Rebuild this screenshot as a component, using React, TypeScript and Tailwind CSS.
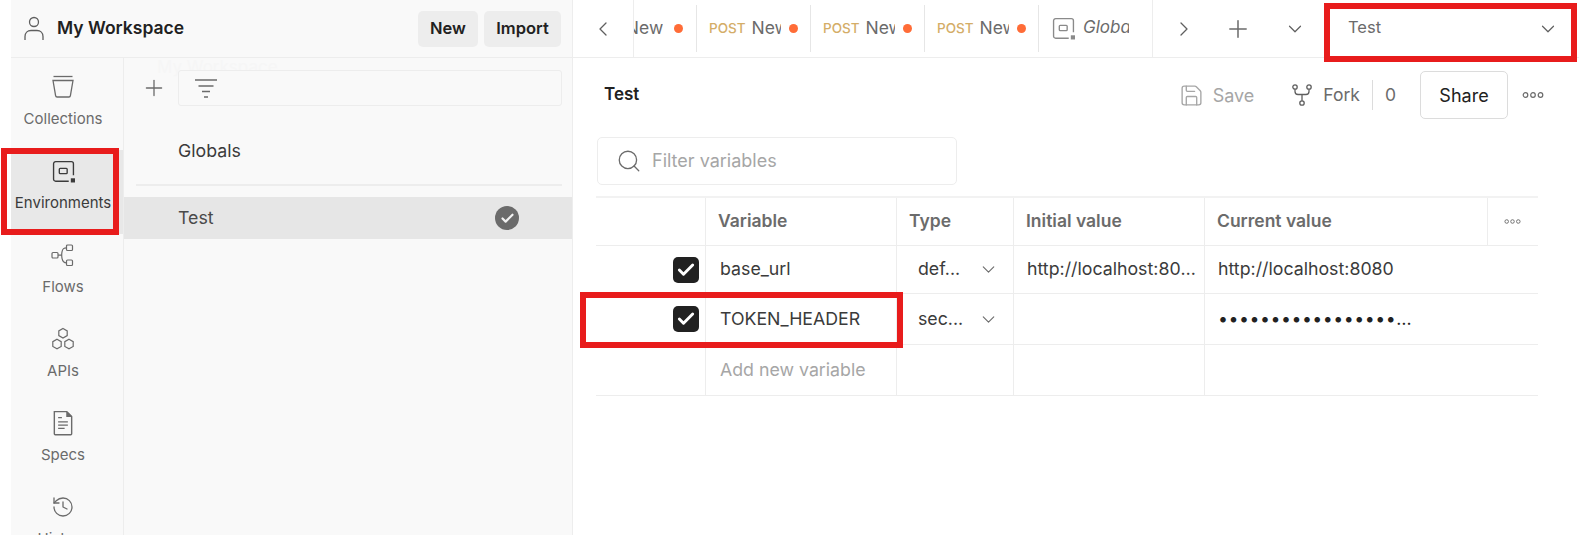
import React from 'react';
import { Check, ChevronDown, ChevronLeft, ChevronRight, History, Plus, Save, Search } from 'lucide-react';

const EnvIcon = ({ className }: { className?: string }) => (
  <svg viewBox="0 0 22 22" fill="none" stroke="currentColor" strokeWidth="1.3" className={className}>
    <path d="M16 20.3H3.5a2 2 0 0 1-2-2V3.6a2 2 0 0 1 2-2h15a2 2 0 0 1 2 2v11" />
    <rect x="7" y="8" width="7.5" height="5" rx="0.8" />
    <rect x="18" y="17.5" width="4" height="4" fill="currentColor" stroke="none" />
  </svg>
);

const CollectionsIcon = () => (
  <svg viewBox="0 0 24 24" fill="none" stroke="#6b6b6b" strokeWidth="1.3" className="h-[24px] w-[24px]">
    <path d="M2.5 1.5h19" />
    <path d="M2 5.5h20l-2.6 15.2a1.5 1.5 0 0 1-1.5 1.3H6.1a1.5 1.5 0 0 1-1.5-1.3z" />
  </svg>
);

const FlowsIcon = () => (
  <svg viewBox="0 0 24 24" fill="none" stroke="#6b6b6b" strokeWidth="1.2" className="h-[24px] w-[24px]">
    <rect x="1" y="9.5" width="6" height="5.5" rx="1" />
    <rect x="15.5" y="2" width="6" height="5.5" rx="1" />
    <rect x="15.5" y="17" width="6" height="5.5" rx="1" />
    <path d="M7 12.2h3.5M15.5 4.8c-3.5 0-4 1.5-4.5 4-.4 2-.4 4.2 0 6.5.5 2.500 1 4.500 4.500 4.500" />
  </svg>
);

const ApisIcon = () => (
  <svg viewBox="0 0 24 24" fill="none" stroke="#6b6b6b" strokeWidth="1.2" className="h-[24px] w-[24px]">
    <path d="M12 1.500l4.200 2.400v4.700L12 11l-4.200-2.400V3.900z" />
    <path d="M6 12.300l4.200 2.400v4.700L6 21.800l-4.200-2.400v-4.700z" />
    <path d="M18 12.300l4.200 2.400v4.700L18 21.800l-4.200-2.400v-4.700z" />
  </svg>
);

const SpecsIcon = () => (
  <svg viewBox="0 0 24 24" fill="none" stroke="#6b6b6b" strokeWidth="1.3" className="h-[26px] w-[26px]">
    <path d="M4 1.500h11.500L20 6v16a.8.8 0 0 1-.8.8H4.800A.8.8 0 0 1 4 22z" />
    <path d="M15 1.500h1L20 5.500V6.500h-5z" fill="#6b6b6b" stroke="none" />
    <path d="M7.500 7h3.500M7.500 11h9M7.500 14h9M7.500 17h6" />
  </svg>
);

const UserIcon = () => (
  <svg viewBox="0 0 24 26" fill="none" stroke="#5f5f5f" strokeWidth="1.3" className="h-[26px] w-[24px]">
    <circle cx="12" cy="6" r="4.500" />
    <path d="M3 24v-3.500c0-3.500 2.500-6 6-6h6c3.500 0 6 2.500 6 6V24" />
  </svg>
);

const ForkIcon = () => (
  <svg viewBox="0 0 20 22" fill="none" stroke="#5f5f5f" strokeWidth="1.300" className="ml-[38px] h-[22px] w-[20px]">
    <circle cx="3" cy="3" r="2.200" />
    <circle cx="17" cy="3" r="2.200" />
    <circle cx="10" cy="19" r="2.200" />
    <path d="M3 5.200v2.300a3 3 0 0 0 3 3h8a3 3 0 0 0 3-3V5.200M10 10.500v6.300" />
  </svg>
);

const Dots = ({ size }: { size: string }) => (
  <svg viewBox="0 0 22 6" fill="none" stroke="#6b6b6b" strokeWidth="1.200" className={size}>
    <circle cx="3.500" cy="3" r="2.300" />
    <circle cx="11" cy="3" r="2.300" />
    <circle cx="18.500" cy="3" r="2.300" />
  </svg>
);

const NavItem = ({ icon, label, active }: { icon: React.ReactNode; label: string; active?: boolean }) => (
  <div className={`flex h-[84px] flex-col items-center pr-[8px] pt-[9px] ${active ? 'bg-[#e8e8e8] text-[#3b3b3b]' : 'text-[#6b6b6b]'}`}>
    <div className="flex h-[24px] items-center justify-center">{icon}</div>
    <div className="mt-[10px] text-[15px] leading-[20px]">{label}</div>
  </div>
);

const PostTab = () => (
  <div className="flex h-[47px] w-[114px] shrink-0 items-center border-r border-[#e6e6e6] pl-[12px]">
    <span className="text-[13.500px] font-medium text-[#d4ad67]">POST</span>
    <span className="ml-[6px] w-[29px] overflow-hidden text-[17.500px] text-[#6b6b6b]">New</span>
    <span className="ml-[8px] h-[9px] w-[9px] rounded-full bg-[#ff6c37]" />
  </div>
);

const Checkbox = () => (
  <div className="flex h-[26px] w-[26px] items-center justify-center rounded-[5px] bg-[#212121]">
    <Check className="h-[20px] w-[20px] text-white" strokeWidth={3.500} />
  </div>
);

const colsClass = 'grid grid-cols-[110px_191px_117px_191px_283px_50px]';
const cellClass = 'flex items-center border-r border-[#ededed] overflow-hidden';

const TypeCell = ({ value }: { value: string }) => (
  <div className={`${cellClass} justify-between pl-[21px] pr-[14px] text-[17.750px] text-[#3b3b3b]`}>
    <span>{value}</span>
    <ChevronDown className="h-[21px] w-[21px] text-[#6b6b6b]" strokeWidth={1.300} />
  </div>
);

export default function App() {
  return (
    <div className="relative flex h-[535px] w-[1579px] overflow-hidden bg-white font-['Inter',sans-serif]">
      <div className="w-[11px] shrink-0" />

      {/* left panel */}
      <div className="flex w-[562px] shrink-0 flex-col border-r border-[#ededed] bg-[#f9f9f9]">
        <div className="flex h-[58px] shrink-0 items-center justify-between border-b border-[#ededed] pl-[11px] pr-[11px]">
          <div className="flex items-center">
            <UserIcon />
            <span className="ml-[11px] text-[17.500px] font-semibold text-[#212121]">My Workspace</span>
          </div>
          <div className="flex gap-[6px]">
            <div className="flex h-[36px] w-[60px] items-center justify-center rounded-[5px] bg-[#ededed] text-[16.500px] font-semibold text-[#212121]">New</div>
            <div className="flex h-[36px] w-[77px] items-center justify-center rounded-[5px] bg-[#ededed] text-[16.500px] font-semibold text-[#212121]">Import</div>
          </div>
        </div>
        <div className="flex min-h-0 flex-1">
          <div className="w-[113px] shrink-0 border-r border-[#ededed] pt-[8px]">
            <NavItem icon={<CollectionsIcon />} label="Collections" />
            <NavItem icon={<EnvIcon className="h-[23px] w-[23px] text-[#3b3b3b]" />} label="Environments" active />
            <NavItem icon={<FlowsIcon />} label="Flows" />
            <NavItem icon={<ApisIcon />} label="APIs" />
            <NavItem icon={<SpecsIcon />} label="Specs" />
            <NavItem icon={<History className="h-[24px] w-[24px] text-[#6b6b6b]" strokeWidth={1.300} />} label="History" />
          </div>
          <div className="relative min-w-0 flex-1">
            <div className="absolute left-[33px] top-[-3px] text-[17px] text-[#f6f6f6]">My Workspace</div>
            <div className="relative flex items-center pl-[17px] pr-[10px] pt-[12px]">
              <Plus className="h-[26px] w-[26px] text-[#6b6b6b]" strokeWidth={1.200} />
              <div className="ml-[11px] flex h-[36px] flex-1 items-center rounded-[3px] border border-[#ededed] bg-[#f9f9f9] pl-[16px]">
                <svg viewBox="0 0 22 20" fill="none" stroke="#6b6b6b" strokeWidth="1.300" className="h-[20px] w-[22px]">
                  <path d="M0 2h22M3.500 8h15M7 13.500h8M9 19h4" />
                </svg>
              </div>
            </div>
            <div className="ml-[12px] mr-[10px] flex h-[80px] items-center border-b-2 border-[#ededed] pl-[42px] pt-[12px] text-[17.750px] text-[#3b3b3b]">Globals</div>
            <div className="mt-[11px] flex h-[42px] items-center justify-between bg-[#e6e6e6] pl-[54px] pr-[53px] text-[17.750px] text-[#4a4a4a]">
              <span>Test</span>
              <div className="flex h-[24px] w-[24px] items-center justify-center rounded-full bg-[#6b6b6b]">
                <Check className="h-[15px] w-[15px] text-[#f2f2f2]" strokeWidth={3.500} />
              </div>
            </div>
          </div>
        </div>
      </div>

      {/* right panel */}
      <div className="flex min-w-0 flex-1 flex-col">
        <div className="flex h-[58px] shrink-0 items-start border-b border-[#ededed]">
          <div className="flex h-[57px] w-[60px] items-center pl-[18px]">
            <ChevronLeft className="h-[24px] w-[24px] text-[#5f5f5f]" strokeWidth={1.300} />
          </div>
          <div className="flex h-[57px] w-[520px] shrink-0 items-center overflow-hidden border-x border-[#ededed] pb-[1px]">
            <div className="flex h-[47px] w-[63px] shrink-0 items-center justify-end border-r border-[#e6e6e6] pr-[13px]">
              <span className="mr-[11px] w-[30px] overflow-hidden whitespace-nowrap text-right text-[17.500px] text-[#6b6b6b] [direction:rtl]">New</span>
              <span className="h-[9px] w-[9px] rounded-full bg-[#ff6c37]" />
            </div>
            <PostTab />
            <PostTab />
            <PostTab />
            <div className="flex h-[47px] shrink-0 items-center pl-[13px]">
              <EnvIcon className="h-[23px] w-[23px] text-[#8a8a8a]" />
              <span className="ml-[8px] w-[46px] overflow-hidden text-[17px] italic text-[#6b6b6b]">Globals</span>
            </div>
          </div>
          <div className="flex h-[57px] w-[172px] shrink-0 items-center">
            <ChevronRight className="ml-[19px] h-[24px] w-[24px] text-[#5f5f5f]" strokeWidth={1.300} />
            <Plus className="ml-[28px] h-[28px] w-[28px] text-[#6b6b6b]" strokeWidth={1.300} />
            <ChevronDown className="ml-[32px] h-[22px] w-[22px] text-[#5f5f5f]" strokeWidth={1.300} />
          </div>
          <div className="flex h-[57px] flex-1 items-center justify-between pl-[23px] pr-[20px]">
            <span className="pb-[2px] text-[16.500px] text-[#6b6b6b]">Test</span>
            <ChevronDown className="h-[22px] w-[22px] text-[#5f5f5f]" strokeWidth={1.300} />
          </div>
        </div>

        <div className="flex h-[74px] shrink-0 items-center justify-between pl-[31px] pr-[35px]">
          <span className="text-[17px] font-semibold text-[#212121]">Test</span>
          <div className="flex items-center">
            <Save className="h-[25px] w-[25px] text-[#a6a6a6]" strokeWidth={1.300} />
            <span className="ml-[9px] text-[18px] text-[#a6a6a6]">Save</span>
            <ForkIcon />
            <span className="ml-[11px] text-[17.500px] text-[#6b6b6b]">Fork</span>
            <div className="ml-[12px] h-[30px] w-px bg-[#dcdcdc]" />
            <span className="ml-[12px] text-[17.500px] text-[#6b6b6b]">0</span>
            <div className="ml-[24px] flex h-[48px] w-[88px] items-center justify-center rounded-[5px] border border-[#dcdcdc] text-[18px] text-[#212121]">Share</div>
            <Dots size="ml-[14px] h-[6px] w-[22px]" />
          </div>
        </div>

        <div className="ml-[24px] mt-[5px] flex h-[48px] w-[360px] shrink-0 items-center rounded-[5px] border border-[#ededed] pb-[1px] pl-[18px]">
          <Search className="h-[26px] w-[26px] text-[#6b6b6b]" strokeWidth={1.200} />
          <span className="ml-[10px] text-[18px] text-[#a6a6a6]">Filter variables</span>
        </div>

        <div className="ml-[23px] mt-[11px] w-[942px] border-t-2 border-[#f2f2f2]">
          <div className={`${colsClass} h-[48px] border-b border-[#ededed] text-[17.500px] font-semibold text-[#6b6b6b]`}>
            <div className={cellClass} />
            <div className={`${cellClass} pl-[12px]`}>Variable</div>
            <div className={`${cellClass} pl-[12px]`}>Type</div>
            <div className={`${cellClass} pl-[12px]`}>Initial value</div>
            <div className={`${cellClass} pl-[12px]`}>Current value</div>
            <div className="flex items-center pl-[16px]"><Dots size="h-[5px] w-[17px]" /></div>
          </div>
          <div className={`${colsClass} h-[48px] border-b border-[#ededed] text-[17.750px] text-[#3b3b3b]`}>
            <div className={`${cellClass} justify-end pr-[6px]`}><Checkbox /></div>
            <div className={`${cellClass} pl-[14px]`}>base_url</div>
            <TypeCell value="def..." />
            <div className={`${cellClass} pl-[13px] pr-[6px]`}><span className="truncate">http://localhost:8080</span></div>
            <div className="flex items-center pl-[13px]">http://localhost:8080</div>
            <div />
          </div>
          <div className={`${colsClass} h-[51px] border-b border-[#ededed] text-[17.750px] text-[#3b3b3b]`}>
            <div className={`${cellClass} justify-end pr-[6px]`}><Checkbox /></div>
            <div className={`${cellClass} pl-[14px]`}>TOKEN_HEADER</div>
            <TypeCell value="sec..." />
            <div className={cellClass} />
            <div className="flex items-center pl-[13px] text-[#212121]">
              <span className="w-[202px] truncate tracking-[0.500px]">••••••••••••••••••••••••••</span>
            </div>
            <div />
          </div>
          <div className={`${colsClass} h-[51px] border-b border-[#ededed] text-[17.750px] text-[#a6a6a6]`}>
            <div className={cellClass} />
            <div className={`${cellClass} pl-[14px]`}>Add new variable</div>
            <div className={cellClass} />
            <div className={cellClass} />
            <div />
            <div />
          </div>
        </div>
      </div>

      {/* red annotation boxes */}
      <div className="absolute left-[1px] top-[148px] h-[87px] w-[118px] border-[6px] border-[#e81c1c]" />
      <div className="absolute left-[1324px] top-[3px] h-[59px] w-[253px] border-[6px] border-[#e81c1c]" />
      <div className="absolute left-[580px] top-[292px] h-[56px] w-[323px] border-[6px] border-[#e81c1c]" />
    </div>
  );
}
